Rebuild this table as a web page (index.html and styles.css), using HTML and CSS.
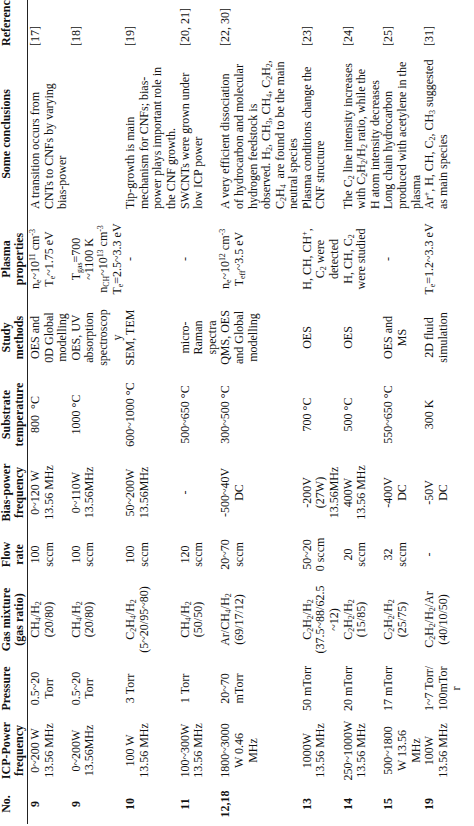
FILE: index.html
```html
<!DOCTYPE html>
<html lang="en">
<head>
<meta charset="utf-8">
<title>ICP CVD table</title>
<link rel="stylesheet" href="styles.css">
</head>
<body>
<div class="viewport">
  <div class="rotor">
    <table class="tbl">
      <colgroup>
        <col class="c-no"><col class="c-icp"><col class="c-pres"><col class="c-gas"><col class="c-flow"><col class="c-bias"><col class="c-sub"><col class="c-study"><col class="c-plasma"><col class="c-concl"><col class="c-ref">
      </colgroup>
      <thead>
        <tr>
          <th>No.</th>
          <th>ICP-Power<br>frequency</th>
          <th>Pressure</th>
          <th>Gas mixture<br>(gas ratio)</th>
          <th>Flow<br>rate</th>
          <th>Bias-power<br>frequency</th>
          <th>Substrate<br>temperature</th>
          <th>Study<br>methods</th>
          <th>Plasma<br>properties</th>
          <th>Some conclusions</th>
          <th class="ref">Reference</th>
        </tr>
      </thead>
      <tbody>
        <tr class="first">
          <td class="no">9</td>
          <td>0~200 W<br>13.56 MHz</td>
          <td>0.5~20<br>Torr</td>
          <td>CH<sub>4</sub>/H<sub>2</sub><br>(20/80)</td>
          <td>100<br>sccm</td>
          <td>0~120 W<br>13.56 MHz</td>
          <td>800 &nbsp;°C</td>
          <td>OES and<br>0D Global<br>modelling</td>
          <td>n<sub>e</sub>~10<sup>11</sup> cm<sup>-3</sup><br>T<sub>e</sub>~1.75 eV</td>
          <td class="left">A transition occurs from<br>CNTs to CNFs by varying<br>bias-power</td>
          <td class="ref">[17]</td>
        </tr>
        <tr>
          <td class="no">9</td>
          <td>0~200W<br>13.56MHz</td>
          <td>0.5~20<br>Torr</td>
          <td>CH<sub>4</sub>/H<sub>2</sub><br>(20/80)</td>
          <td>100<br>sccm</td>
          <td>0~110W<br>13.56MHz</td>
          <td>1000 °C</td>
          <td>OES, UV<br>absorption<br>spectroscop<br>y</td>
          <td>T<sub>gas</sub>=700<br>~1100 K<br>n<sub>CH</sub>~10<sup>13</sup> cm<sup>-3</sup><br>T<sub>e</sub>=2.5~3.3 eV</td>
          <td class="left"></td>
          <td class="ref">[18]</td>
        </tr>
        <tr>
          <td class="no">10</td>
          <td>100 W<br>13.56 MHz</td>
          <td>3 Torr</td>
          <td>C<sub>2</sub>H<sub>4</sub>/H<sub>2</sub><br>(5~20/95~80)</td>
          <td>100<br>sccm</td>
          <td>50~200W<br>13.56MHz</td>
          <td>600~1000 °C</td>
          <td>SEM, TEM</td>
          <td>-</td>
          <td class="left">Tip-growth is main<br>mechanism for CNFs; bias-<br>power plays important role in<br>the CNF growth.</td>
          <td class="ref">[19]</td>
        </tr>
        <tr>
          <td class="no">11</td>
          <td>100~300W<br>13.56 MHz</td>
          <td>1 Torr</td>
          <td>CH<sub>4</sub>/H<sub>2</sub><br>(50/50)</td>
          <td>120<br>sccm</td>
          <td>-</td>
          <td>500~650 °C</td>
          <td>micro-<br>Raman<br>spectra</td>
          <td>-</td>
          <td class="left">SWCNTs were grown under<br>low ICP power</td>
          <td class="ref">[20, 21]</td>
        </tr>
        <tr>
          <td class="no">12,18</td>
          <td>1800~3000<br>W 0.46<br>MHz</td>
          <td>20~70<br>mTorr</td>
          <td>Ar/CH<sub>4</sub>/H<sub>2</sub><br>(69/17/12)</td>
          <td>20~70<br>sccm</td>
          <td>-500~40V<br>DC</td>
          <td>300~500 °C</td>
          <td>QMS, OES<br>and Global<br>modelling</td>
          <td>n<sub>e</sub>~10<sup>12</sup> cm<sup>-3</sup><br>T<sub>eff</sub>~3.5 eV</td>
          <td class="left">A very efficient dissociation<br>of hydrocarbon and molecular<br>hydrogen feedstock is<br>observed. H<sub>2</sub>, CH<sub>3</sub>, CH<sub>4</sub>, C<sub>2</sub>H<sub>2</sub>,<br>C<sub>2</sub>H<sub>4</sub> &nbsp;are found to be the main<br>neutral species</td>
          <td class="ref">[22, 30]</td>
        </tr>
        <tr>
          <td class="no">13</td>
          <td>1000W<br>13.56 MHz</td>
          <td>50 mTorr</td>
          <td>C<sub>2</sub>H<sub>2</sub>/H<sub>2</sub><br>(37.5~88/62.5<br>~12)</td>
          <td>50~20<br>0 sccm</td>
          <td>-200V<br>(27W)<br>13.56MHz</td>
          <td>700 °C</td>
          <td>OES</td>
          <td>H, CH, CH<sup>+</sup>,<br>C<sub>2</sub> were<br>detected</td>
          <td class="left">Plasma conditions change the<br>CNF structure</td>
          <td class="ref">[23]</td>
        </tr>
        <tr>
          <td class="no">14</td>
          <td>250~1000W<br>13.56 MHz</td>
          <td>20 mTorr</td>
          <td>C<sub>2</sub>H<sub>2</sub>/H<sub>2</sub><br>(15/85)</td>
          <td>20<br>sccm</td>
          <td>400W<br>13.56 MHz</td>
          <td>500 °C</td>
          <td>OES</td>
          <td>H, CH, C<sub>2</sub><br>were studied</td>
          <td class="left">The C<sub>2</sub> line intensity increases<br>with C<sub>2</sub>H<sub>2</sub>/H<sub>2</sub> ratio, while the<br>H atom intensity decreases</td>
          <td class="ref">[24]</td>
        </tr>
        <tr>
          <td class="no">15</td>
          <td>500~1800<br>W 13.56<br>MHz</td>
          <td>17 mTorr</td>
          <td>C<sub>2</sub>H<sub>2</sub>/H<sub>2</sub><br>(25/75)</td>
          <td>32<br>sccm</td>
          <td>-400V<br>DC</td>
          <td>550~650 °C</td>
          <td>OES and<br>MS</td>
          <td>-</td>
          <td class="left">Long chain hydrocarbon<br>produced with acetylene in the<br>plasma</td>
          <td class="ref">[25]</td>
        </tr>
        <tr>
          <td class="no">19</td>
          <td>100W<br>13.56 MHz</td>
          <td>1~7 Torr/<br>100mTor<br>r</td>
          <td>C<sub>2</sub>H<sub>2</sub>/H<sub>2</sub>/Ar<br>(40/10/50)</td>
          <td>-</td>
          <td>-50V<br>DC</td>
          <td>300 K</td>
          <td>2D fluid<br>simulation</td>
          <td>T<sub>e</sub>=1.2~3.3 eV</td>
          <td class="left">Ar<sup>+</sup>, H, CH, C<sub>2</sub>, CH<sub>3</sub> suggested<br>as main species</td>
          <td class="ref">[31]</td>
        </tr>
      </tbody>
    </table>
  </div>
</div>
</body>
</html>
```

FILE: styles.css
```css
html, body {
  margin: 0;
  padding: 0;
  background: #ffffff;
}

.viewport {
  width: 474px;
  height: 826px;
  overflow: hidden;
}

.rotor {
  width: 879px;
  height: 474px;
  transform-origin: 0 0;
  transform: translateY(826px) rotate(-90deg);
}

.tbl {
  width: 879px;
  margin-top: -2px;
  table-layout: fixed;
  border-collapse: collapse;
  font-family: "Liberation Serif", "Times New Roman", serif;
  font-size: 12px;
  color: #111;
}

.c-no { width: 40px; }
.c-icp { width: 67px; }
.c-pres { width: 57px; }
.c-gas { width: 81px; }
.c-flow { width: 49px; }
.c-bias { width: 75px; }
.c-sub { width: 81px; }
.c-study { width: 73px; }
.c-plasma { width: 84px; }
.c-concl { width: 166px; }
.c-ref { width: 106px; }

.tbl th {
  font-weight: bold;
  line-height: 13px;
  padding: 0 0 1px 0;
  text-align: center;
  vertical-align: top;
  white-space: nowrap;
  border-bottom: 1px solid #222;
}

.tbl td {
  line-height: 13.6px;
  padding: 0;
  text-align: center;
  vertical-align: top;
  white-space: nowrap;
}

.tbl td.left {
  text-align: left;
  padding-left: 8px;
}

.tbl th.ref,
.tbl td.ref {
  text-align: left;
  padding-left: 5px;
}

.tbl td.no {
  font-weight: bold;
}

.tbl tr.first td {
  padding-top: 1px;
}

sub, sup {
  font-size: 0.66em;
  line-height: 0;
}

sub { vertical-align: -0.25em; }
sup { vertical-align: 0.5em; }
```
